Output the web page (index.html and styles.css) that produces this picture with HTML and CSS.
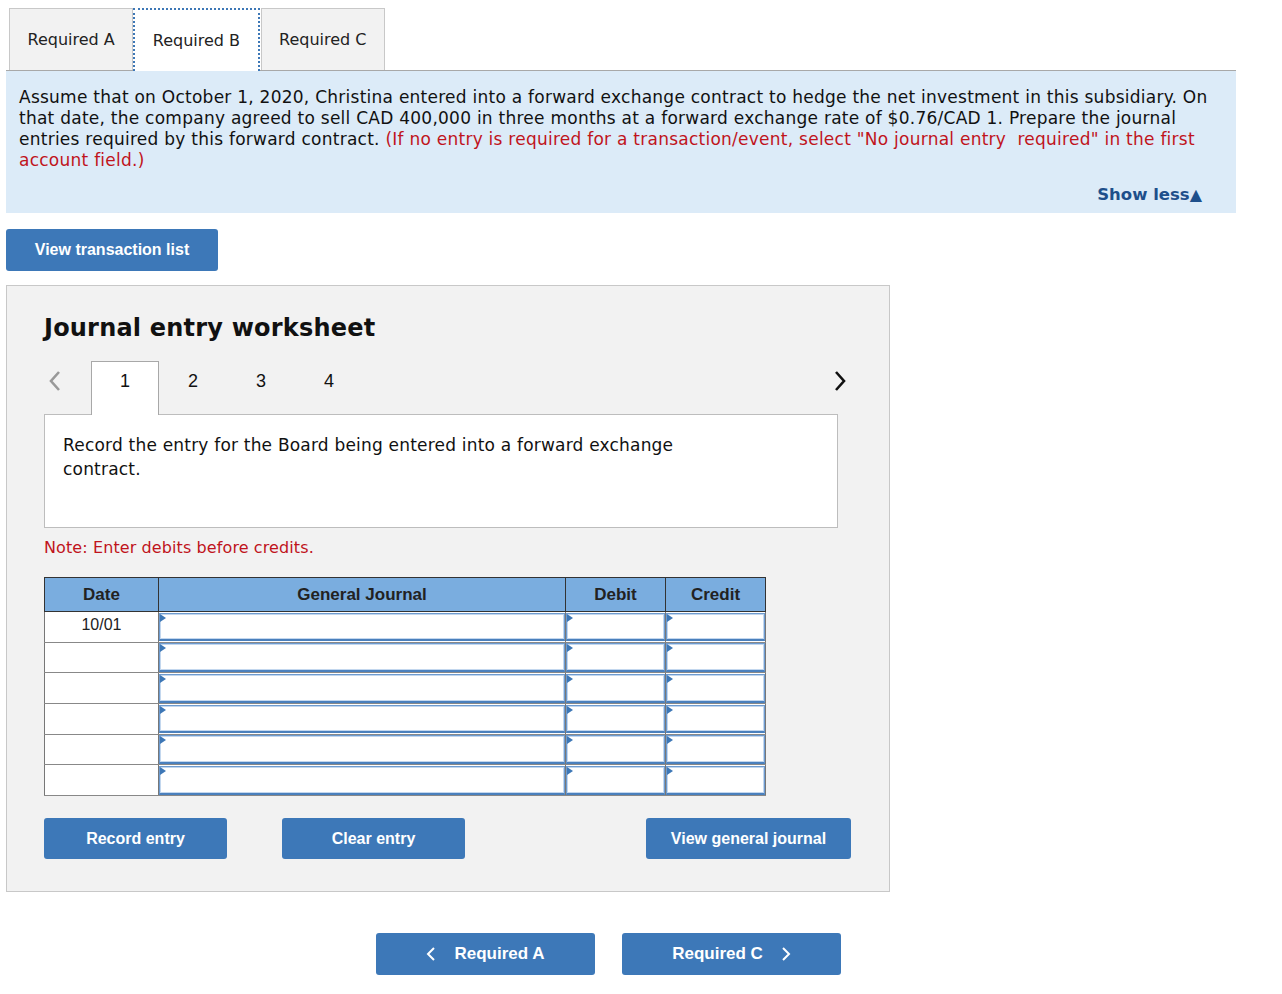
FILE: index.html
```html
<!DOCTYPE html>
<html lang="en">
<head>
    <meta charset="UTF-8">
    <title>Journal entry worksheet</title>
    <link rel="stylesheet" href="styles.css">
</head>
<body>
    <div class="tabs">
        <div class="tab">Required A</div>
        <div class="tab active">Required B</div>
        <div class="tab">Required C</div>
    </div>

    <div class="problem">
        <p>Assume that on October 1, 2020, Christina entered into a forward exchange contract to hedge the net investment in this subsidiary. On that date, the company agreed to sell CAD 400,000 in three months at a forward exchange rate of $0.76/CAD 1. Prepare the journal entries required by this forward contract. <span class="hint">(If no entry is required for a transaction/event, select "No journal entry &nbsp;required" in the first account field.)</span></p>
        <div class="show-less">Show less<span class="arrow">&#9650;</span></div>
    </div>

    <button class="btn btn-list">View transaction list</button>

    <div class="worksheet">
        <h2>Journal entry worksheet</h2>

        <div class="steps">
            <span class="chev chev-left">
                <svg width="14" height="22" viewBox="0 0 14 22"><path d="M11 2 L3 11 L11 20" fill="none" stroke="#999" stroke-width="2.6"/></svg>
            </span>
            <span class="step current">1</span>
            <span class="step">2</span>
            <span class="step">3</span>
            <span class="step">4</span>
            <span class="chev chev-right">
                <svg width="14" height="22" viewBox="0 0 14 22"><path d="M3 2 L11 11 L3 20" fill="none" stroke="#111" stroke-width="2.6"/></svg>
            </span>
        </div>

        <div class="desc">Record the entry for the Board being entered into a forward exchange contract.</div>

        <p class="note">Note: Enter debits before credits.</p>

        <table class="journal">
            <thead>
                <tr>
                    <th class="col-date">Date</th>
                    <th class="col-acct">General Journal</th>
                    <th class="col-amt">Debit</th>
                    <th class="col-amt">Credit</th>
                </tr>
            </thead>
            <tbody>
                <tr>
                    <td class="date">10/01</td>
                    <td><div class="cell"></div></td>
                    <td><div class="cell"></div></td>
                    <td><div class="cell"></div></td>
                </tr>
                <tr>
                    <td class="date"></td>
                    <td><div class="cell"></div></td>
                    <td><div class="cell"></div></td>
                    <td><div class="cell"></div></td>
                </tr>
                <tr>
                    <td class="date"></td>
                    <td><div class="cell"></div></td>
                    <td><div class="cell"></div></td>
                    <td><div class="cell"></div></td>
                </tr>
                <tr>
                    <td class="date"></td>
                    <td><div class="cell"></div></td>
                    <td><div class="cell"></div></td>
                    <td><div class="cell"></div></td>
                </tr>
                <tr>
                    <td class="date"></td>
                    <td><div class="cell"></div></td>
                    <td><div class="cell"></div></td>
                    <td><div class="cell"></div></td>
                </tr>
                <tr>
                    <td class="date"></td>
                    <td><div class="cell"></div></td>
                    <td><div class="cell"></div></td>
                    <td><div class="cell"></div></td>
                </tr>
            </tbody>
        </table>

        <div class="actions">
            <button class="btn btn-record">Record entry</button>
            <button class="btn btn-clear">Clear entry</button>
            <button class="btn btn-view">View general journal</button>
        </div>
    </div>

    <div class="bottom-nav">
        <button class="btn btn-nav">
            <svg width="10" height="16" viewBox="0 0 10 16"><path d="M8 2 L2 8 L8 14" fill="none" stroke="#fff" stroke-width="2"/></svg>
            <span>Required A</span>
        </button>
        <button class="btn btn-nav">
            <span>Required C</span>
            <svg width="10" height="16" viewBox="0 0 10 16"><path d="M2 2 L8 8 L2 14" fill="none" stroke="#fff" stroke-width="2"/></svg>
        </button>
    </div>
</body>
</html>
```

FILE: styles.css
```css
body {
  margin: 0;
  padding: 8px 0 20px 6px;
  font-family: "DejaVu Sans", Verdana, sans-serif;
  color: #111;
  background: #fff;
}

/* top tabs */
.tabs {
  display: flex;
  align-items: flex-start;
  width: 1230px;
  height: 63px;
  padding-left: 3px;
  box-sizing: border-box;
  border-bottom: 1px solid #a8a8a8;
}

.tab {
  box-sizing: border-box;
  height: 62px;
  padding: 0 17.5px;
  display: flex;
  align-items: center;
  font-size: 16px;
  background: #f2f2f2;
  border: 1px solid #c8c8c8;
  border-bottom: none;
  color: #222;
}

.tab.active {
  background: #fff;
  border: 2px dotted #3d77b6;
  border-bottom: none;
  height: 63px;
  position: relative;
  z-index: 1;
}

.tab:last-child {
  margin-left: 1px;
}

/* problem statement */
.problem {
  width: 1230px;
  box-sizing: border-box;
  background: #dcebf8;
  padding: 16px 20px 7px 13px;
}

.problem p {
  margin: 0;
  font-size: 17px;
  line-height: 21px;
  letter-spacing: 0.25px;
}

.hint {
  color: #c0141c;
}

.show-less {
  margin-top: 13px;
  margin-right: 14px;
  text-align: right;
  font-weight: bold;
  font-size: 16.5px;
  line-height: 22px;
  color: #1e4f8b;
}

.show-less .arrow {
  font-size: 16px;
}

/* buttons */
.btn {
  border: none;
  border-radius: 3px;
  background: #3d78b8;
  color: #fff;
  font-family: "Liberation Sans", Arial, sans-serif;
  font-weight: bold;
  font-size: 16px;
  cursor: pointer;
  padding: 0;
}

.btn-list {
  display: block;
  margin-top: 16px;
  width: 212px;
  height: 42px;
}

/* worksheet panel */
.worksheet {
  margin-top: 14px;
  width: 884px;
  height: 607px;
  box-sizing: border-box;
  background: #f2f2f2;
  border: 1px solid #c8c8c8;
  padding: 27px 38px 0 37px;
}

.worksheet h2 {
  margin: 0;
  font-size: 24px;
  line-height: 30px;
  font-weight: bold;
  letter-spacing: 0.2px;
}

.steps {
  display: flex;
  margin-top: 18px;
  height: 53px;
  font-family: "Liberation Sans", Arial, sans-serif;
  font-size: 18px;
  line-height: 22px;
}

.chev {
  display: flex;
  padding-top: 9px;
}

.chev-left {
  width: 47px;
  padding-left: 4px;
  box-sizing: border-box;
}

.chev-right {
  margin-left: auto;
  margin-right: 4px;
}

.step {
  width: 68px;
  height: 53px;
  padding-top: 9px;
  text-align: center;
  box-sizing: border-box;
}

.step.current {
  background: #fff;
  border: 1px solid #a8a8a8;
  border-bottom: none;
  padding-top: 8px;
  margin-bottom: -1px;
  height: 54px;
  position: relative;
  z-index: 1;
}

.desc {
  width: 794px;
  height: 114px;
  box-sizing: border-box;
  background: #fff;
  border: 1px solid #bdbdbd;
  padding: 18px 150px 0 18px;
  font-size: 17px;
  line-height: 24px;
  letter-spacing: 0.2px;
}

.note {
  margin: 10px 0 0;
  font-size: 16px;
  line-height: 20px;
  letter-spacing: 0.1px;
  color: #c0141c;
}

/* journal table */
.journal {
  margin-top: 19px;
  border-collapse: collapse;
  font-family: "Liberation Sans", Arial, sans-serif;
  border: 1px solid #777;
}

.journal th {
  height: 33px;
  padding: 0;
  background: #7aaddf;
  border: 1px solid #333;
  font-size: 17px;
  font-weight: bold;
  color: #222;
}

.col-date { width: 113px; }
.col-acct { width: 406px; }
.col-amt { width: 99px; }

.journal td {
  height: 29.7px;
  padding: 0;
  background: #fff;
  border-left: 1px solid #777;
  border-right: 1px solid #777;
  border-bottom: 1px solid #888;
}

.journal td.date {
  text-align: center;
  vertical-align: top;
  padding-top: 4px;
  height: 25.7px;
  font-size: 16px;
  color: #222;
}

.cell {
  position: relative;
  height: 28.7px;
  box-sizing: border-box;
  border: 1px solid #6d9bd0;
  border-bottom: 2px solid #4a80bd;
  box-shadow: inset 0 0 0 1px #c3d7ee;
  background: #fff;
}

/* small marker in the corner of each entry field */
.cell::before {
  content: "";
  position: absolute;
  left: 0;
  top: 0;
  border-top: 4px solid transparent;
  border-bottom: 4px solid transparent;
  border-left: 6px solid #3d77b6;
}

.actions {
  display: flex;
  margin-top: 22px;
}

.actions .btn {
  height: 41px;
}

.btn-record,
.btn-clear {
  width: 183px;
}

.btn-clear {
  margin-left: 55px;
}

.btn-view {
  width: 205px;
  margin-left: auto;
}

/* previous / next */
.bottom-nav {
  display: flex;
  gap: 27px;
  margin-top: 41px;
  padding-left: 370px;
}

.btn-nav {
  width: 219px;
  height: 42px;
  display: flex;
  align-items: center;
  justify-content: center;
  gap: 18px;
  font-size: 17px;
}
```
